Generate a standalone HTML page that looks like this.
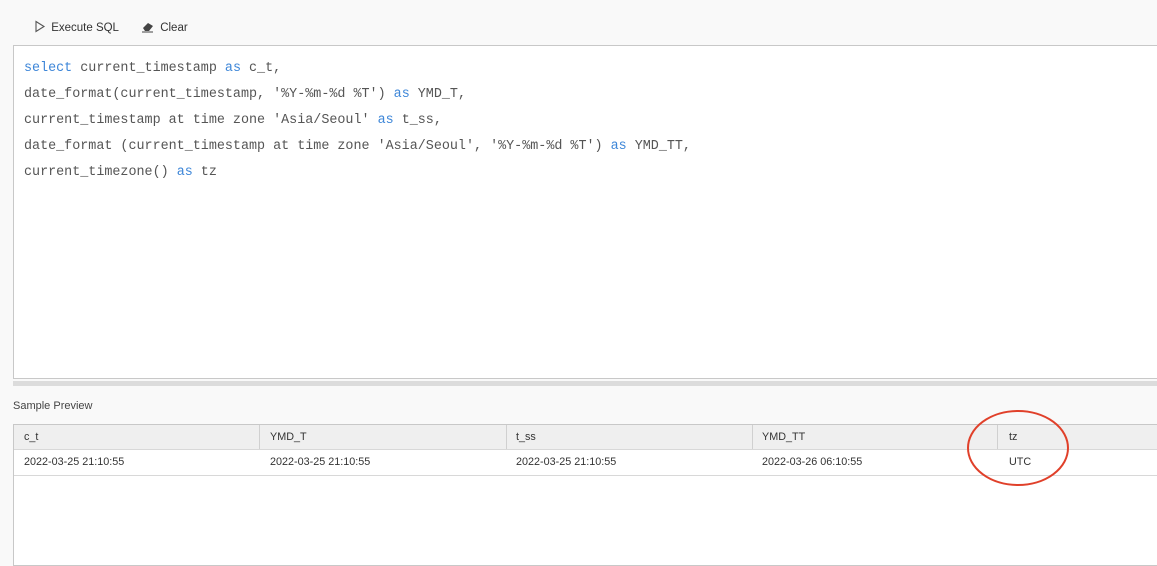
<html><head><style>
body{margin:0;width:1157px;height:558px;background:#f9f9f9;font-family:"Liberation Sans",sans-serif;position:relative;overflow:hidden}
.tb{position:absolute;top:20px;font-size:11.5px;color:#333}
.ed{position:absolute;left:13px;top:45px;width:1150px;height:332px;background:#fff;border:1px solid #c8c8c8;}
.code{position:absolute;left:10px;top:10px;font-family:"Liberation Mono",monospace;font-size:13.4px;color:#555;line-height:26px;white-space:pre}
.k{color:#3d86d8}
.bar{position:absolute;left:13px;top:381px;width:1144px;height:5px;background:#dcdcdc}
.sp{position:absolute;left:13px;top:400px;font-size:11px;color:#444}
.tbl{position:absolute;left:13px;top:424px;width:1150px;height:140px;background:#fff;border:1px solid #c8c8c8}
.hd{position:absolute;left:0;top:0;width:100%;height:24px;background:#efefef;border-bottom:1px solid #d8d8d8}
.row{position:absolute;left:0;top:25px;width:100%;height:25px;border-bottom:1px solid #d8d8d8}
.c{position:absolute;font-size:10.8px;color:#333;top:6px}
.v{position:absolute;top:0;width:1px;height:24px;background:#d0d0d0}
</style></head><body>
<div class="tb" style="left:34px"><svg width="14" height="13" style="vertical-align:-2px"><path d="M2 1.5 L10 6.5 L2 11.5 Z" fill="none" stroke="#555" stroke-width="1.1"/></svg> Execute SQL</div>
<div class="tb" style="left:141px"><svg width="16" height="13" style="vertical-align:-2px"><path d="M2 8 L7 3 L12 6 L8 11 L4 11 Z" fill="#444"/><path d="M1 12 H12" stroke="#444"/></svg> Clear</div>
<div class="ed"><div class="code"><span class="k">select</span> current_timestamp <span class="k">as</span> c_t,
date_format(current_timestamp, '%Y-%m-%d %T') <span class="k">as</span> YMD_T,
current_timestamp at time zone 'Asia/Seoul' <span class="k">as</span> t_ss,
date_format (current_timestamp at time zone 'Asia/Seoul', '%Y-%m-%d %T') <span class="k">as</span> YMD_TT,
current_timezone() <span class="k">as</span> tz</div></div>
<div class="bar"></div>
<div class="sp">Sample Preview</div>
<div class="tbl">
<div class="hd">
<div class="c" style="left:10px">c_t</div><div class="v" style="left:245px"></div>
<div class="c" style="left:256px">YMD_T</div><div class="v" style="left:492px"></div>
<div class="c" style="left:502px">t_ss</div><div class="v" style="left:738px"></div>
<div class="c" style="left:748px">YMD_TT</div><div class="v" style="left:983px"></div>
<div class="c" style="left:995px">tz</div>
</div>
<div class="row">
<div class="c" style="left:10px">2022-03-25 21:10:55</div>
<div class="c" style="left:256px">2022-03-25 21:10:55</div>
<div class="c" style="left:502px">2022-03-25 21:10:55</div>
<div class="c" style="left:748px">2022-03-26 06:10:55</div>
<div class="c" style="left:995px">UTC</div>
</div>
</div>
<svg style="position:absolute;left:0;top:0" width="1157" height="558"><ellipse cx="1018" cy="448" rx="50" ry="37" fill="none" stroke="#e0402a" stroke-width="2"/></svg>
</body></html>
